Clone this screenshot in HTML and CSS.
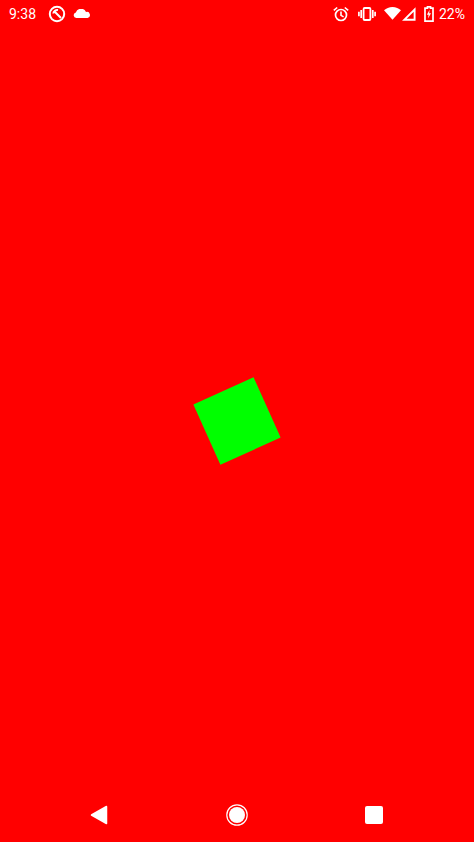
FILE: index.html
```html
<!DOCTYPE html>
<html lang="en">
<head>
<meta charset="utf-8">
<title>Rotating square</title>
<link rel="stylesheet" href="styles.css">
</head>
<body>
<div class="screen">
  <header class="status">
    <div class="status-left">
      <span class="time">9:38</span>
      <svg class="ic-sync" viewBox="0 0 18 18"><circle cx="9" cy="9" r="7.200" fill="none" stroke="#fff" stroke-width="2"/><path d="M5.300 8.500a3.900 3.900 0 0 1 4.700-3.400M6 6l7 7" stroke="#fff" stroke-width="2" fill="none"/></svg>
      <svg class="ic-cloud" viewBox="0 0 18 9"><path d="M3.300 9a2.800 2.800 0 0 1-.5-5.500A5.500 5.500 0 0 1 13 2.900 3.100 3.100 0 0 1 14.600 9z" fill="#fff"/></svg>
    </div>
    <div class="status-right">
      <svg class="ic-alarm" viewBox="0 0 16 16"><circle cx="8" cy="9" r="5.500" fill="none" stroke="#fff" stroke-width="1.700"/><path d="M8 5.600V9.400l2.600 1.500M.8 4.400l3.400-2.900M15.200 4.400l-3.400-2.900" fill="none" stroke="#fff" stroke-width="1.600"/></svg>
      <svg class="ic-vibrate" viewBox="0 0 18 14"><rect x="5.600" y="1" width="6.800" height="12" rx="1" fill="none" stroke="#fff" stroke-width="1.800"/><path d="M3.200 3v8M14.800 3v8M.9 4.800v4.400M17.100 4.800v4.400" stroke="#fff" stroke-width="1.700" fill="none"/></svg>
      <svg class="ic-wifi" viewBox="0 0 17 13"><path d="M8.500 12.800L0 3.200C2.200 1.300 5.200 0 8.500 0s6.300 1.300 8.500 3.200z" fill="#fff"/></svg>
      <svg class="ic-signal" viewBox="0 0 14 14"><path d="M12.600 2.500V12.800H2.200z" fill="none" stroke="#fff" stroke-width="1.900"/></svg>
      <svg class="ic-battery" viewBox="0 0 10 16"><path d="M3.500.9h3v1.300h2.500v12.900H1V2.200h2.500z" fill="none" stroke="#fff" stroke-width="1.700"/><path d="M5.600 3.800L2.900 8.700h1.700L4 12.600l3-5.300H5.200z" fill="#fff"/></svg>
      <span class="battery-text">22%</span>
    </div>
  </header>
  <main class="stage">
    <div class="square"></div>
  </main>
  <nav class="navbar">
    <svg class="nav-back" viewBox="0 0 18 20"><path d="M16.500 1.500V18.500L1.500 10z" fill="#fff" stroke="#fff" stroke-width="1.500" stroke-linejoin="round"/></svg>
    <svg class="nav-home" viewBox="0 0 22 22"><circle cx="11" cy="11" r="10.200" fill="none" stroke="#fff" stroke-width="1.200"/><circle cx="11" cy="11" r="8" fill="#fff"/></svg>
    <div class="nav-recent"></div>
  </nav>
</div>
</body>
</html>
```
FILE: styles.css
```css
* { box-sizing: border-box; }
html, body { margin: 0; height: 100%; }
body { background: #ff0000; overflow: hidden; }
svg { display: block; flex: none; }

.screen {
  width: 474px;
  height: 842px;
  display: flex;
  flex-direction: column;
  background: #ff0000;
  color: #fff;
  font-family: Roboto, "Liberation Sans", sans-serif;
}

.status {
  height: 28px;
  flex: none;
  display: flex;
  justify-content: space-between;
  align-items: center;
  padding: 0 9px;
  font-size: 14px;
}
.status-left, .status-right { display: flex; align-items: center; }
.time { width: 39px; }
.ic-sync { width: 18px; height: 18px; margin-right: 7px; }
.ic-cloud { width: 18px; height: 9px; margin-top: -2px; }
.ic-alarm { width: 16px; height: 16px; margin-right: 9px; margin-top: -1px; }
.ic-vibrate { width: 18px; height: 14px; margin-right: 8px; }
.ic-wifi { width: 17px; height: 13px; margin-right: 1px; margin-top: -1px; }
.ic-signal { width: 14px; height: 14px; margin-right: 8px; }
.ic-battery { width: 10px; height: 16px; margin-right: 5px; }

.stage {
  flex: 1;
  display: flex;
  align-items: center;
  justify-content: center;
  padding-top: 28px;
}
.square {
  width: 66px;
  height: 66px;
  background: #00ff00;
  transform: rotate(-24.2deg);
}

.navbar {
  height: 56px;
  flex: none;
  display: flex;
  align-items: center;
  justify-content: space-between;
  padding: 1px 91px 0 90px;
}
.nav-back { width: 18px; height: 20px; }
.nav-home { width: 22px; height: 22px; }
.nav-recent { width: 18px; height: 18px; background: #fff; border-radius: 2px; }
```
